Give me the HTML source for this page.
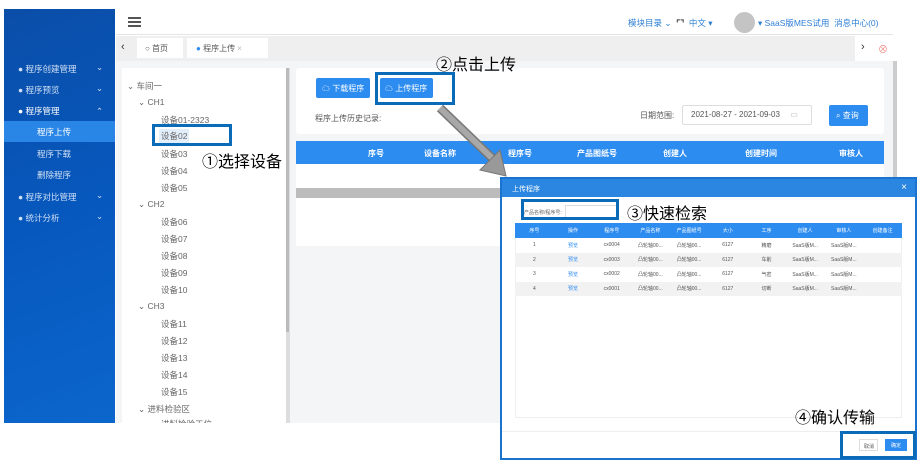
<!DOCTYPE html>
<html><head><meta charset="utf-8"><style>
*{margin:0;padding:0;box-sizing:border-box}
body{width:920px;height:462px;background:#fff;position:relative;overflow:hidden;font-family:"Liberation Sans","Noto Sans CJK SC",sans-serif;font-size:9px;color:#555}
.a{position:absolute;white-space:nowrap}
.side{left:4px;top:9px;width:111px;height:414px;background:linear-gradient(160deg,#0a4ea8 0%,#0758be 50%,#0b66cc 100%)}
.side div{position:absolute;color:#cfe0f5;font-size:8.5px;white-space:nowrap}
.tree{width:164px;height:360px}
.tree div{position:absolute;font-size:8.5px;color:#666;white-space:nowrap}
.ann{position:absolute;font-size:16px;color:#000;font-family:"Noto Sans CJK SC",sans-serif;white-space:nowrap}
.hl{position:absolute;border:3px solid #0a6cb8}
th,td{font-weight:normal;white-space:nowrap}
</style></head><body>
<div class="a side">
 <div style="left:14px;top:54px">● 程序创建管理</div><div style="left:92px;top:53px">⌄</div>
 <div style="left:14px;top:75px">● 程序预览</div><div style="left:92px;top:74px">⌄</div>
 <div style="left:14px;top:96px;color:#fff">● 程序管理</div><div style="left:92px;top:97px">⌃</div>
 <div style="left:0;top:112px;width:111px;height:21px;background:#2a86e6"></div>
 <div style="left:33px;top:117px;color:#fff">程序上传</div>
 <div style="left:33px;top:139px">程序下载</div>
 <div style="left:33px;top:160px">删除程序</div>
 <div style="left:14px;top:182px">● 程序对比管理</div><div style="left:92px;top:181px">⌄</div>
 <div style="left:14px;top:203px">● 统计分析</div><div style="left:92px;top:202px">⌄</div>
</div>
<div class="a" style="left:116px;top:9px;width:777px;height:26px;background:#fff;border-bottom:1px solid #e5e5e5"></div>
<div class="a" style="left:128px;top:17px;width:13px;height:2px;background:#555;box-shadow:0 4px 0 #555,0 8px 0 #555"></div>
<div class="a" style="left:628px;top:17px;color:#2d7fd6;font-size:8.5px">模块目录 ⌄ &nbsp;<b style="color:#333">⌜⌝</b>&nbsp; 中文 ▾</div>
<div class="a" style="left:734px;top:12px;width:21px;height:21px;border-radius:50%;background:#c4c4c4"></div>
<div class="a" style="left:758px;top:17px;color:#2d7fd6;font-size:8.5px">▾ SaaS版MES试用 &nbsp;消息中心(0)</div>
<div class="a" style="left:116px;top:36px;width:777px;height:25px;background:#efefef"></div>
<div class="a" style="left:121px;top:41px;font-size:11px;color:#333">‹</div>
<div class="a" style="left:137px;top:38px;width:46px;height:20px;background:#fff;padding:5px 0 0 8px;font-size:8px">○ 首页</div>
<div class="a" style="left:187px;top:38px;width:81px;height:20px;background:#fff;padding:5px 0 0 9px;font-size:8px"><span style="color:#2d8cf0">●</span> 程序上传 <span style="color:#bbb">×</span></div>
<div class="a" style="left:855px;top:36px;width:38px;height:25px;background:#fff"></div>
<div class="a" style="left:861px;top:41px;font-size:11px;color:#333">›</div>
<div class="a" style="left:878px;top:41px;font-size:10px;color:#f08a8a">⊗</div>
<div class="a" style="left:116px;top:61px;width:777px;height:362px;background:#f4f5f7"></div>
<div class="a" style="left:893px;top:61px;width:4px;height:120px;background:#ccc"></div>
<div class="a" style="left:122px;top:68px;width:164px;height:355px;background:#fff"></div>
<div class="a" style="left:286px;top:68px;width:4px;height:355px;background:#ddd"></div>
<div class="a" style="left:286px;top:68px;width:3px;height:264px;background:#bbb"></div>
<div class="a" style="left:122px;top:419px;width:164px;height:4px;overflow:hidden"></div>
<div class="a tree" style="left:122px;top:0;height:423px;overflow:hidden">
 <div style="left:5px;top:80px">⌄ 车间一</div>
 <div style="left:16px;top:97px">⌄ CH1</div>
 <div style="left:39px;top:114px">设备01-2323</div>
 <div style="left:37px;top:129px;background:#e3eefb;padding:1px 2px">设备02</div>
 <div style="left:39px;top:148px">设备03</div>
 <div style="left:39px;top:165px">设备04</div>
 <div style="left:39px;top:182px">设备05</div>
 <div style="left:16px;top:199px">⌄ CH2</div>
 <div style="left:39px;top:216px">设备06</div>
 <div style="left:39px;top:233px">设备07</div>
 <div style="left:39px;top:250px">设备08</div>
 <div style="left:39px;top:267px">设备09</div>
 <div style="left:39px;top:284px">设备10</div>
 <div style="left:16px;top:301px">⌄ CH3</div>
 <div style="left:39px;top:318px">设备11</div>
 <div style="left:39px;top:335px">设备12</div>
 <div style="left:39px;top:352px">设备13</div>
 <div style="left:39px;top:369px">设备14</div>
 <div style="left:39px;top:386px">设备15</div>
 <div style="left:16px;top:403px">⌄ 进料检验区</div>
 <div style="left:39px;top:418px">进料检验工位</div>
</div>
<div class="a" style="left:296px;top:68px;width:588px;height:66px;background:#fff;border-radius:3px"></div>
<div class="a" style="left:316px;top:78px;width:54px;height:20px;background:#2d8cf0;color:#fff;font-size:8px;padding:5px 0 0 6px;border-radius:2px">☁ 下载程序</div>
<div class="a" style="left:380px;top:78px;width:53px;height:20px;background:#2d8cf0;color:#fff;font-size:8px;padding:5px 0 0 5px;border-radius:2px">☁ 上传程序</div>
<div class="a" style="left:315px;top:113px;font-size:8px">程序上传历史记录:</div>
<div class="a" style="left:640px;top:110px;font-size:8px">日期范围:</div>
<div class="a" style="left:682px;top:105px;width:130px;height:20px;border:1px solid #ddd;border-radius:2px;font-size:8px;padding:4px 0 0 8px;color:#555">2021-08-27 - 2021-09-03 <span style="color:#bbb;margin-left:8px">▭</span></div>
<div class="a" style="left:829px;top:105px;width:39px;height:21px;background:#2d8cf0;color:#fff;font-size:8px;padding:5px 0 0 7px;border-radius:2px">⌕ 查询</div>
<div class="a" style="left:296px;top:141px;width:588px;height:105px;background:#fff"></div>
<div class="a" style="left:296px;top:141px;width:588px;height:23px;background:#2d8cf0;color:#fff;font-size:8px;font-weight:bold">
 <span class="a" style="left:72px;top:7px">序号</span><span class="a" style="left:128px;top:7px">设备名称</span><span class="a" style="left:212px;top:7px">程序号</span><span class="a" style="left:281px;top:7px">产品图纸号</span><span class="a" style="left:367px;top:7px">创建人</span><span class="a" style="left:449px;top:7px">创建时间</span><span class="a" style="left:543px;top:7px">审核人</span>
</div>
<div class="a" style="left:296px;top:188px;width:204px;height:10px;background:#bcbcbc"></div>
<svg class="a" style="left:430px;top:100px" width="80" height="80"><line x1="10" y1="8" x2="62" y2="58" stroke="#777" stroke-width="9"/><line x1="10" y1="8" x2="62" y2="58" stroke="#a8a8a8" stroke-width="6"/><polygon points="50,70 76,76 70,50" fill="#999" stroke="#777"/></svg>
<div class="a" style="left:500px;top:177px;width:417px;height:283px;background:#fff;border:2px solid #1a74cf"></div>
<div class="a" style="left:502px;top:179px;width:413px;height:18px;background:#2a86e0;color:#fff;font-size:7px;padding:5px 0 0 10px">上传程序<span style="position:absolute;right:8px;top:3px;font-size:10px">×</span></div>
<div class="a" style="left:524px;top:209px;font-size:5px;color:#666">产品名称/程序号:</div>
<div class="a" style="left:565px;top:205px;width:54px;height:14px;border:1px solid #ddd"></div>
<div class="a" style="left:515px;top:223px;width:387px;height:195px;border:1px solid #eee"></div>
<div class="a" style="left:515px;top:223px;width:387px;height:15px;background:#2d8cf0"></div>
<table class="a" style="left:515px;top:223px;width:387px;border-collapse:collapse;font-size:5px;text-align:center;table-layout:fixed">
<tr style="height:15px;color:#fff;font-weight:bold"><td>序号</td><td>操作</td><td>程序号</td><td>产品名称</td><td>产品图纸号</td><td>大小</td><td>工序</td><td>创建人</td><td>审核人</td><td>创建备注</td></tr>
<tr style="height:14.5px"><td>1</td><td style="color:#2d8cf0">预览</td><td>cx0004</td><td>凸轮轴00...</td><td>凸轮轴00...</td><td>6127</td><td>精磨</td><td>SaaS版M...</td><td>SaaS版M...</td><td></td></tr>
<tr style="height:14.5px;background:#f2f2f2"><td>2</td><td style="color:#2d8cf0">预览</td><td>cx0003</td><td>凸轮轴00...</td><td>凸轮轴00...</td><td>6127</td><td>车削</td><td>SaaS版M...</td><td>SaaS版M...</td><td></td></tr>
<tr style="height:14.5px"><td>3</td><td style="color:#2d8cf0">预览</td><td>cx0002</td><td>凸轮轴00...</td><td>凸轮轴00...</td><td>6127</td><td>气密</td><td>SaaS版M...</td><td>SaaS版M...</td><td></td></tr>
<tr style="height:14.5px;background:#f2f2f2"><td>4</td><td style="color:#2d8cf0">预览</td><td>cx0001</td><td>凸轮轴00...</td><td>凸轮轴00...</td><td>6127</td><td>切断</td><td>SaaS版M...</td><td>SaaS版M...</td><td></td></tr>
</table>
<div class="a" style="left:502px;top:431px;width:413px;height:1px;background:#eee"></div>
<div class="a" style="left:859px;top:439px;width:19px;height:12px;border:1px solid #ddd;font-size:5px;padding:3px 0 0 4px">取消</div>
<div class="a" style="left:885px;top:439px;width:22px;height:12px;background:#2d8cf0;color:#fff;font-size:5px;padding:3px 0 0 6px">确定</div>
<div class="hl" style="left:152px;top:124px;width:80px;height:22px"></div>
<div class="hl" style="left:375px;top:72px;width:80px;height:33px"></div>
<div class="hl" style="left:521px;top:199px;width:98px;height:21px"></div>
<div class="hl" style="left:840px;top:431px;width:76px;height:28px"></div>
<div class="ann" style="left:202px;top:148px">①选择设备</div>
<div class="ann" style="left:436px;top:51px">②点击上传</div>
<div class="ann" style="left:627px;top:200px">③快速检索</div>
<div class="ann" style="left:795px;top:404px">④确认传输</div>
</body></html>
